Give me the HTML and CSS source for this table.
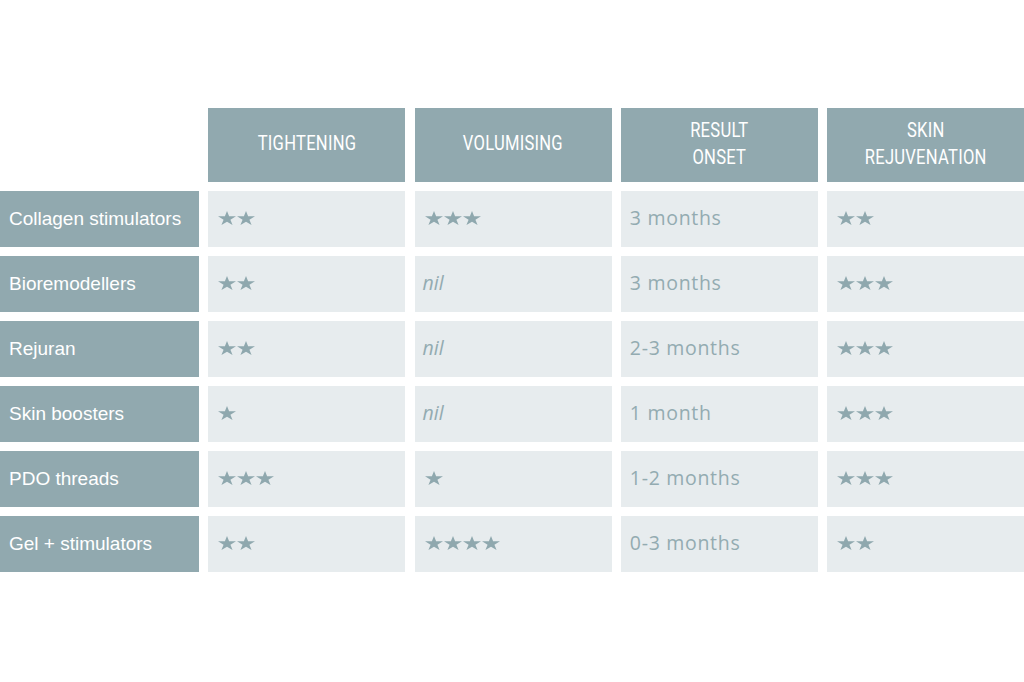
FILE: index.html
```html
<!DOCTYPE html>
<html lang="en">
<head>
<meta charset="utf-8">
<title>Treatment comparison</title>
<link rel="stylesheet" href="styles.css">
</head>
<body>
<svg class="defs" width="0" height="0" aria-hidden="true">
  <defs>
    <symbol id="star" viewBox="0 0 20 19" preserveAspectRatio="none">
      <polygon points="10,0 12.35,7.24 19.98,7.24 13.81,11.72 16.18,18.98 10,14.5 3.82,18.98 6.19,11.72 0.02,7.24 7.65,7.24"/>
    </symbol>
  </defs>
</svg>
<main class="table">
  <div class="corner"></div>
  <div class="head"><span class="head-text">TIGHTENING</span></div>
  <div class="head"><span class="head-text">VOLUMISING</span></div>
  <div class="head"><span class="head-text">RESULT<br>ONSET</span></div>
  <div class="head"><span class="head-text">SKIN<br>REJUVENATION</span></div>

  <div class="label">Collagen stimulators</div>
  <div class="cell"><span class="stars"><svg class="star"><use href="#star"/></svg><svg class="star"><use href="#star"/></svg></span></div>
  <div class="cell"><span class="stars"><svg class="star"><use href="#star"/></svg><svg class="star"><use href="#star"/></svg><svg class="star"><use href="#star"/></svg></span></div>
  <div class="cell">3 months</div>
  <div class="cell"><span class="stars"><svg class="star"><use href="#star"/></svg><svg class="star"><use href="#star"/></svg></span></div>

  <div class="label">Bioremodellers</div>
  <div class="cell"><span class="stars"><svg class="star"><use href="#star"/></svg><svg class="star"><use href="#star"/></svg></span></div>
  <div class="cell nil">nil</div>
  <div class="cell">3 months</div>
  <div class="cell"><span class="stars"><svg class="star"><use href="#star"/></svg><svg class="star"><use href="#star"/></svg><svg class="star"><use href="#star"/></svg></span></div>

  <div class="label">Rejuran</div>
  <div class="cell"><span class="stars"><svg class="star"><use href="#star"/></svg><svg class="star"><use href="#star"/></svg></span></div>
  <div class="cell nil">nil</div>
  <div class="cell">2-3 months</div>
  <div class="cell"><span class="stars"><svg class="star"><use href="#star"/></svg><svg class="star"><use href="#star"/></svg><svg class="star"><use href="#star"/></svg></span></div>

  <div class="label">Skin boosters</div>
  <div class="cell"><span class="stars"><svg class="star"><use href="#star"/></svg></span></div>
  <div class="cell nil">nil</div>
  <div class="cell">1 month</div>
  <div class="cell"><span class="stars"><svg class="star"><use href="#star"/></svg><svg class="star"><use href="#star"/></svg><svg class="star"><use href="#star"/></svg></span></div>

  <div class="label">PDO threads</div>
  <div class="cell"><span class="stars"><svg class="star"><use href="#star"/></svg><svg class="star"><use href="#star"/></svg><svg class="star"><use href="#star"/></svg></span></div>
  <div class="cell"><span class="stars"><svg class="star"><use href="#star"/></svg></span></div>
  <div class="cell">1-2 months</div>
  <div class="cell"><span class="stars"><svg class="star"><use href="#star"/></svg><svg class="star"><use href="#star"/></svg><svg class="star"><use href="#star"/></svg></span></div>

  <div class="label">Gel + stimulators</div>
  <div class="cell"><span class="stars"><svg class="star"><use href="#star"/></svg><svg class="star"><use href="#star"/></svg></span></div>
  <div class="cell"><span class="stars"><svg class="star"><use href="#star"/></svg><svg class="star"><use href="#star"/></svg><svg class="star"><use href="#star"/></svg><svg class="star"><use href="#star"/></svg></span></div>
  <div class="cell">0-3 months</div>
  <div class="cell"><span class="stars"><svg class="star"><use href="#star"/></svg><svg class="star"><use href="#star"/></svg></span></div>
</main>
</body>
</html>
```

FILE: styles.css
```css
html, body {
  margin: 0;
  padding: 0;
  background: #ffffff;
}

body {
  width: 1024px;
  height: 682px;
  overflow: hidden;
  font-family: "Liberation Sans", Arial, sans-serif;
}

.defs {
  position: absolute;
  width: 0;
  height: 0;
  overflow: hidden;
}

.table {
  display: grid;
  grid-template-columns: 199px repeat(4, 1fr);
  grid-template-rows: 74px repeat(6, 56px);
  column-gap: 9.33px;
  row-gap: 9px;
  padding-top: 108px;
}

.head {
  background: #91a9af;
  color: #ffffff;
  display: flex;
  align-items: center;
  justify-content: center;
  text-align: center;
  padding-bottom: 3px;
}

.head-text {
  display: inline-block;
  font-family: Roboto, "Liberation Sans", sans-serif;
  font-size: 19.5px;
  line-height: 27px;
  letter-spacing: 0.3px;
  transform: scaleX(0.85);
}

.label {
  background: #91a9af;
  color: #ffffff;
  display: flex;
  align-items: center;
  padding-left: 9px;
  padding-bottom: 1px;
  font-family: "Liberation Sans", Arial, sans-serif;
  font-size: 19px;
}

.cell {
  background: #e7ecee;
  color: #93abb1;
  display: flex;
  align-items: center;
  padding-left: 9px;
  padding-bottom: 3px;
  font-family: "Open Sans", sans-serif;
  font-size: 19.5px;
  letter-spacing: 0.7px;
}

.nil {
  font-style: italic;
  letter-spacing: 0;
  padding-left: 8px;
}

.stars {
  display: flex;
  gap: 1px;
  padding-left: 1px;
  padding-top: 1px;
}

.star {
  width: 18px;
  height: 14px;
  fill: #8fa8ae;
  display: block;
}
```
